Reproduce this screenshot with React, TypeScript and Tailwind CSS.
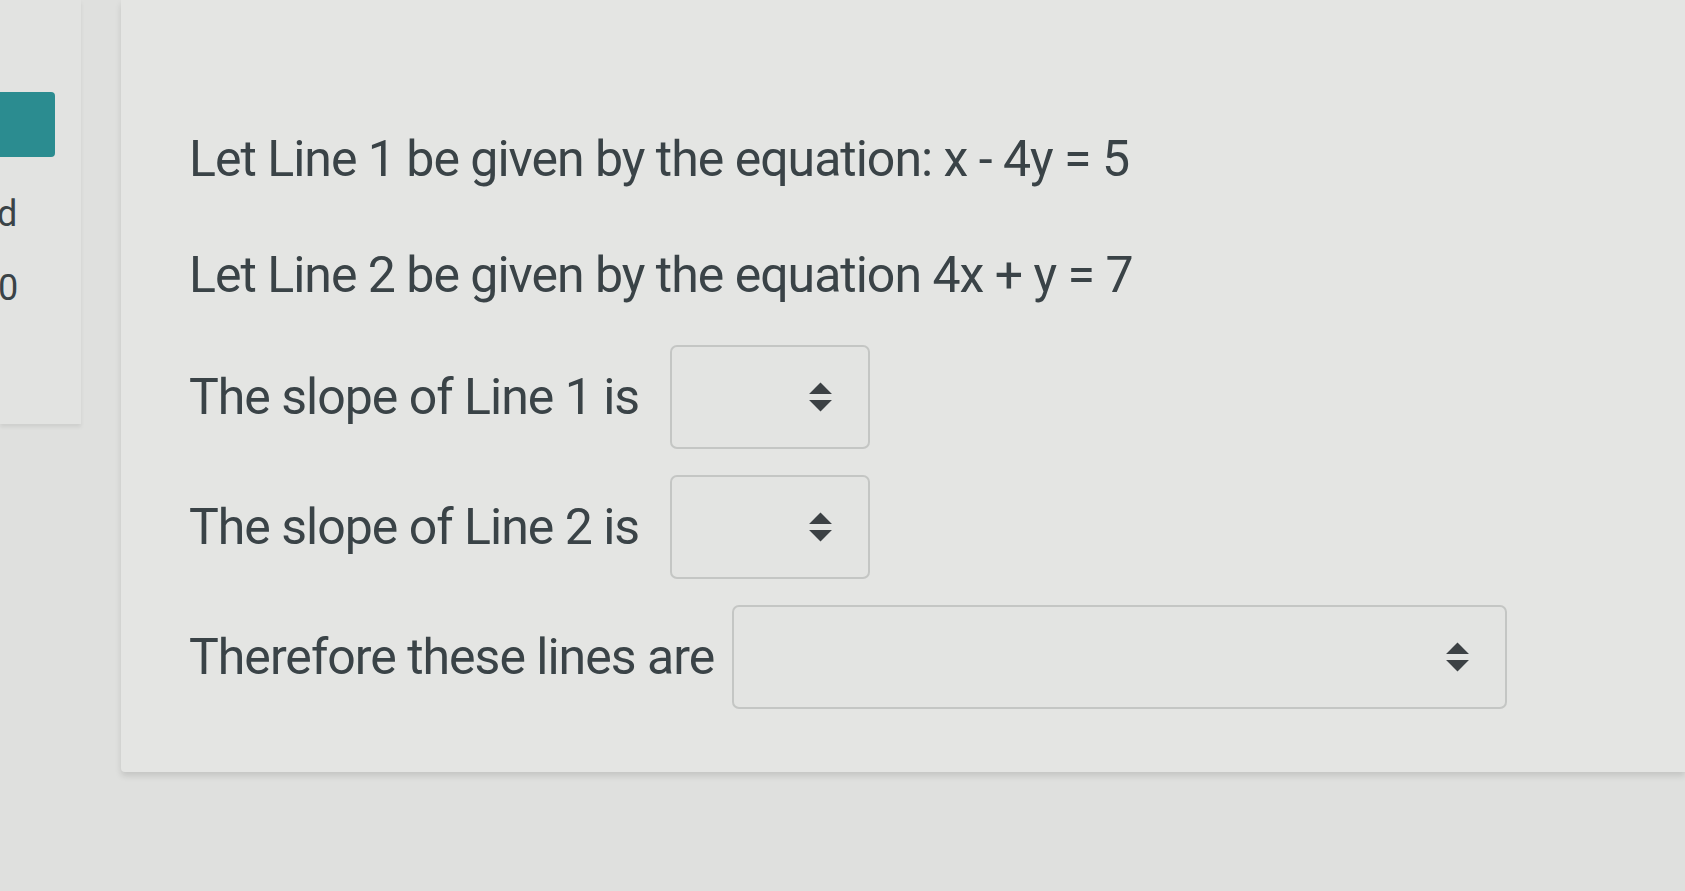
import React from 'react';

function SelectBox({ width }: { width: string }) {
  return (
    <button
      type="button"
      className={`${width} h-[104px] shrink-0 rounded-[7px] border-2 border-[#c4c6c4] bg-[#e3e4e2] flex items-center justify-end pr-[34px]`}
    >
      <svg width="27" height="34" viewBox="0 0 26 32" className="text-[#3c4144]">
        <path d="M13 2 L24 13 L2 13 Z" fill="currentColor" />
        <path d="M2 19 L24 19 L13 30 Z" fill="currentColor" />
      </svg>
    </button>
  );
}

export default function App() {
  const text = "text-[50px] leading-none text-[#3a4347] tracking-[-0.02em]";
  return (
    <div
      className="w-[1685px] h-[891px] overflow-hidden flex bg-[#dfe0de]"
      style={{ fontFamily: 'Roboto, "Noto Sans", sans-serif' }}
    >
      {/* left panel */}
      <div className="w-[81px] h-[424px] shrink-0 bg-[#e2e3e1] shadow-[0_3px_4px_rgba(0,0,0,0.08)] flex flex-col pt-[92px]">
        <div className="w-[55px] h-[65px] bg-[#2b8c90] rounded-r-[4px]" />
        <div className="mt-[39px] -ml-[3px] text-[36px] leading-none text-[#3a4347]">d</div>
        <div className="mt-[38px] -ml-[2px] text-[36px] leading-none text-[#3a4347]">0</div>
      </div>

      {/* main card */}
      <div className="ml-[40px] flex-1 h-[772px] bg-[#e4e5e3] rounded-bl-[4px] shadow-[0_4px_6px_rgba(0,0,0,0.12)] pl-[68px] flex flex-col">
        <div className={`${text} mt-[134px]`}>Let Line 1 be given by the equation: x - 4y = 5</div>
        <div className={`${text} mt-[66px]`}>Let Line 2 be given by the equation 4x + y = 7</div>
        <div className="mt-[45px] flex items-center gap-[31px]">
          <span className={text}>The slope of Line 1 is</span>
          <SelectBox width="w-[200px]" />
        </div>
        <div className="mt-[26px] flex items-center gap-[31px]">
          <span className={text}>The slope of Line 2 is</span>
          <SelectBox width="w-[200px]" />
        </div>
        <div className="mt-[26px] flex items-center gap-[18px]">
          <span className={text}>Therefore these lines are</span>
          <SelectBox width="w-[775px]" />
        </div>
      </div>
    </div>
  );
}
